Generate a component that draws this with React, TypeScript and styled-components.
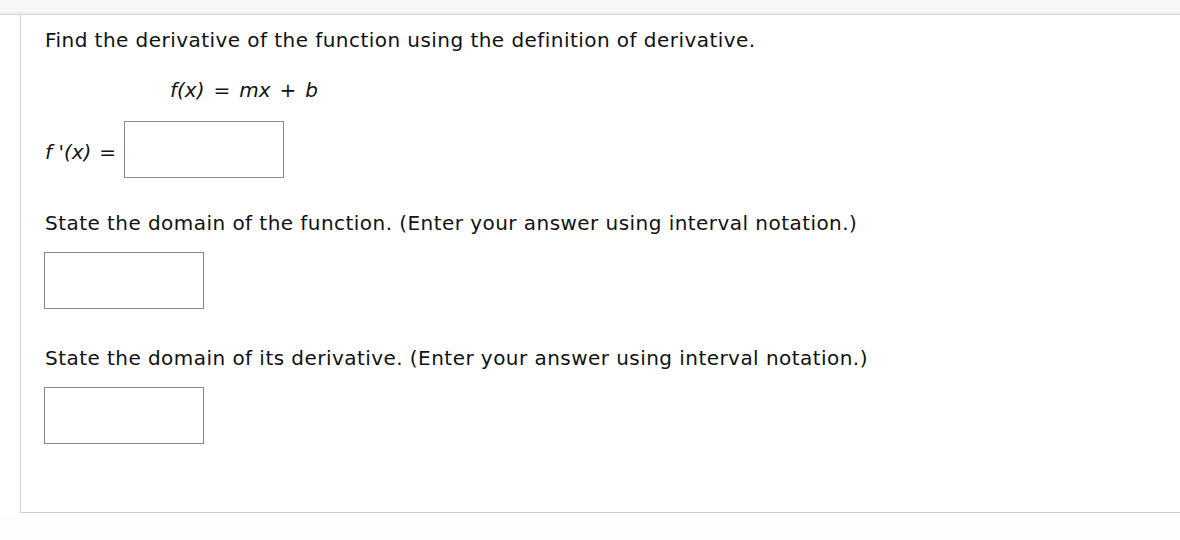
import React from 'react';
import styled, { createGlobalStyle } from 'styled-components';

const Global = createGlobalStyle`
  html, body {
    margin: 0;
    padding: 0;
    background: #fdfdfd;
  }
  body {
    font-family: "DejaVu Sans", Verdana, sans-serif;
    color: #111;
  }
`;

const TopBar = styled.div`
  height: 15px;
  box-sizing: border-box;
  background: #f7f7f7;
  border-bottom: 1px solid #d6d6d6;
  box-shadow: inset 0 -2px 0 #efefef;
`;

const Sheet = styled.div`
  background: #fff;
`;

const Panel = styled.div`
  margin-left: 20px;
  height: 498px;
  box-sizing: border-box;
  border-left: 1px solid #cfcfcf;
  border-bottom: 1px solid #cfcfcf;
  padding: 13px 0 0 24px;
  background: #fff;
  font-size: 20px;
  line-height: 24px;
  letter-spacing: 0.45px;
`;

const Text = styled.p<{ $top?: number }>`
  margin: ${(p) => p.$top ?? 0}px 0 0;
`;

const Equation = styled.div`
  margin: 26px 0 0 125px;
  font-style: italic;
  letter-spacing: 0;
`;

const Op = styled.span`
  font-style: normal;
  margin: 0 9px;
`;

const AnswerRow = styled.div`
  display: flex;
  align-items: center;
  margin-top: 19px;
`;

const Label = styled.span`
  font-style: italic;
  margin: 4px 8px 0 0;
  letter-spacing: 0;
`;

const Eq = styled.span`
  font-style: normal;
  margin-left: 8px;
`;

const Box = styled.input`
  display: block;
  width: 160px;
  height: 57px;
  box-sizing: border-box;
  margin: 0;
  border: 1px solid #8a8a8a;
  background: #fff;
  padding: 0 6px;
  font: inherit;
  outline: none;
`;

const BlockBox = styled(Box)`
  margin: 17px 0 0 -1px;
`;

export default function App() {
  return (
    <>
      <Global />
      <TopBar />
      <Sheet>
        <Panel>
          <Text>Find the derivative of the function using the definition of derivative.</Text>
          <Equation>
            f(x)<Op>=</Op>mx<Op>+</Op>b
          </Equation>
          <AnswerRow>
            <Label>
              f '(x)<Eq>=</Eq>
            </Label>
            <Box />
          </AnswerRow>
          <Text $top={33}>
            State the domain of the function. (Enter your answer using interval notation.)
          </Text>
          <BlockBox />
          <Text $top={37}>
            State the domain of its derivative. (Enter your answer using interval notation.)
          </Text>
          <BlockBox />
        </Panel>
      </Sheet>
    </>
  );
}
